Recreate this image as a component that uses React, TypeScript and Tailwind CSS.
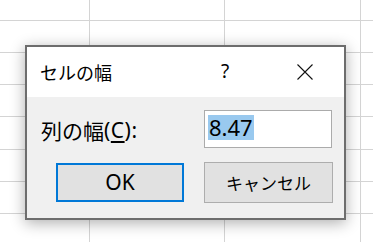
import React from 'react';

const rowHeights = ['h-[21px]', 'h-[32px]', 'h-[32px]', 'h-[32px]', 'h-[33px]', 'h-[32px]', 'h-[32px]', 'h-[32px]'];

function SheetGrid() {
  return (
    <div className="flex flex-col w-full">
      {rowHeights.map((h, i) => (
        <div key={i} className={`flex ${h} border-b border-[#d4d4d4]`}>
          <div className="w-[90px] shrink-0 border-r border-[#d4d4d4]" />
          <div className="w-[135px] shrink-0 border-r border-[#d4d4d4]" />
          <div className="w-[136px] shrink-0 border-r border-[#d4d4d4]" />
          <div className="flex-1" />
        </div>
      ))}
    </div>
  );
}

function CloseIcon() {
  return (
    <svg width="16" height="16" viewBox="0 0 16 16" fill="none" stroke="#111" strokeWidth="1.1">
      <path d="M0.5 0.5 L15.5 15.5 M15.5 0.5 L0.5 15.5" />
    </svg>
  );
}

export default function App() {
  return (
    <div className="relative w-[373px] h-[242px] overflow-hidden bg-white font-['Noto_Sans','Noto_Sans_CJK_JP',sans-serif] text-black">
      <SheetGrid />

      {/* ダイアログ */}
      <div className="absolute left-[25px] top-[45px] w-[321px] h-[175px] border-2 border-[#6d6d6d] bg-[#f0f0f0] flex flex-col shadow-[0_3px_14px_rgba(0,0,0,0.32)]">
        {/* タイトルバー */}
        <div className="h-[50px] shrink-0 bg-white flex items-center">
          <span className="pl-[13px] text-[18px] leading-none font-['Noto_Sans_CJK_JP',sans-serif]">セルの幅</span>
          <div className="ml-auto w-[46px] flex justify-center text-[19px] leading-none mr-[34px] pb-[2px]">?</div>
          <div className="w-[46px] flex justify-center mr-[16px]">
            <CloseIcon />
          </div>
        </div>

        {/* 本体 */}
        <div className="flex flex-col">
          <div className="flex items-center mt-[13px]">
            <div className="w-[177px] pl-[14px] text-[21px] leading-none flex items-center pt-[2px]">
              <span className="font-['Noto_Sans_CJK_JP',sans-serif]">列の幅</span>
              <span className="tracking-[0.5px]">(<span className="underline underline-offset-[3px] decoration-[1.5px]">C</span>):</span>
            </div>
            <div className="w-[128px] h-[38px] bg-white border border-[#ababab] pl-[3px] pt-[4px]">
              <span className="bg-[#99c9ef] text-[22px] leading-[25px] inline-block px-[1px]">8.47</span>
            </div>
          </div>

          <div className="flex items-center mt-[14px] pl-[29px] gap-[20px]">
            <button className="w-[128px] h-[39px] bg-[#e1e1e1] border-2 border-[#0078d7] text-[21px] leading-none flex items-center justify-center">
              OK
            </button>
            <button className="w-[129px] h-[41px] bg-[#e1e1e1] border border-[#adadad] text-[17px] leading-none flex items-center justify-center font-['Noto_Sans_CJK_JP',sans-serif]">
              キャンセル
            </button>
          </div>
        </div>
      </div>
    </div>
  );
}
